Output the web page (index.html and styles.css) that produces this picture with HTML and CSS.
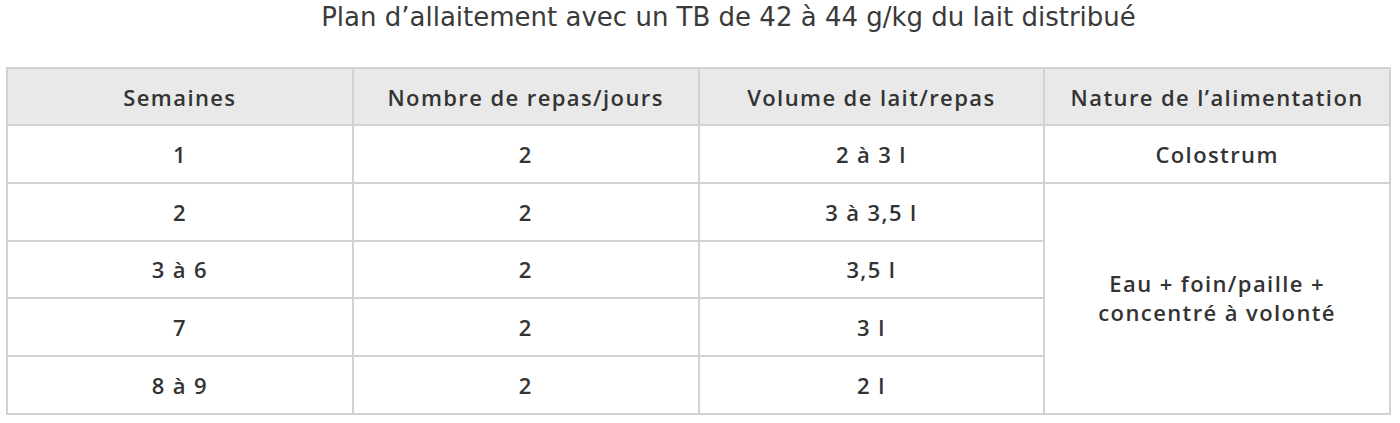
FILE: index.html
```html
<!DOCTYPE html>
<html lang="fr">
<head>
<meta charset="utf-8">
<link rel="stylesheet" href="styles.css">
</head>
<body>
<div class="page">
  <h1 class="title">Plan d’allaitement avec un TB de 42 à 44 g/kg du lait distribué</h1>
  <table class="plan">
    <thead>
      <tr>
        <th>Semaines</th>
        <th>Nombre de repas/jours</th>
        <th>Volume de lait/repas</th>
        <th>Nature de l’alimentation</th>
      </tr>
    </thead>
    <tbody>
      <tr><td>1</td><td>2</td><td>2 à 3 l</td><td>Colostrum</td></tr>
      <tr><td>2</td><td>2</td><td>3 à 3,5 l</td><td rowspan="4" class="merged">Eau + foin/paille +<br>concentré à volonté</td></tr>
      <tr><td>3 à 6</td><td>2</td><td>3,5 l</td></tr>
      <tr><td>7</td><td>2</td><td>3 l</td></tr>
      <tr><td>8 à 9</td><td>2</td><td>2 l</td></tr>
    </tbody>
  </table>
</div>
</body>
</html>
```

FILE: styles.css
```css
html, body {
  margin: 0;
  padding: 0;
  background: #ffffff;
}
.page {
  width: 1400px;
  padding: 2px 0 0 6px;
  box-sizing: border-box;
}
.title {
  margin: 0 0 35px 0;
  padding: 0 0 0 51px;
  font-family: "DejaVu Sans", Verdana, sans-serif;
  font-weight: normal;
  font-size: 26px;
  line-height: 30px;
  color: #3a3a3a;
  text-align: center;
}
.plan {
  border-collapse: collapse;
  width: 1385px;
  table-layout: fixed;
  font-family: "Open Sans", "Liberation Sans", sans-serif;
  font-weight: 600;
  font-size: 22px;
  letter-spacing: 1.4px;
  color: #333333;
}
.plan th, .plan td {
  border: 2px solid #d2d2d2;
  text-align: center;
  vertical-align: middle;
  padding: 0;
  height: 55.8px;
}
.plan th {
  background: #e9e9e9;
  font-weight: 600;
  height: 55px;
}
.plan td.merged {
  line-height: 29px;
}
```
